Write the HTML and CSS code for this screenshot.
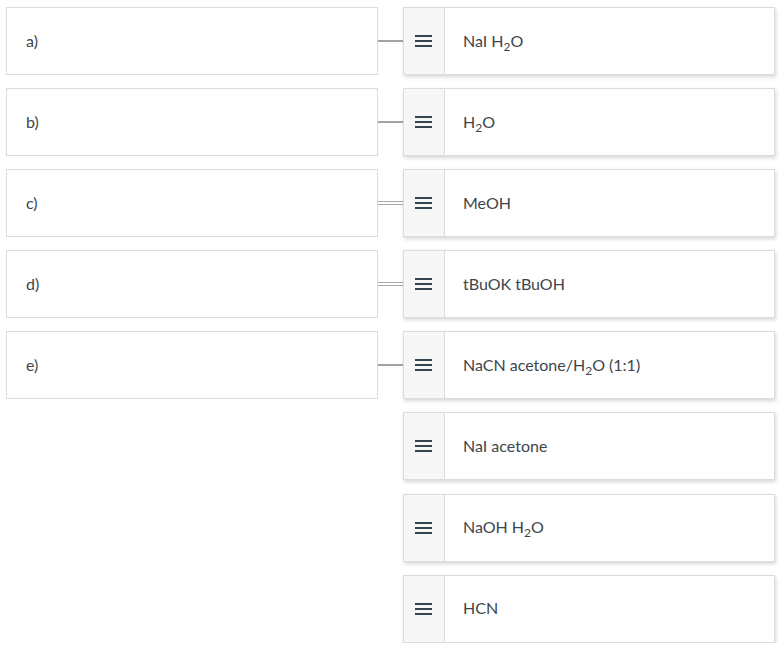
FILE: index.html
```html
<!DOCTYPE html>
<html>
<head>
<meta charset="utf-8">
<link rel="stylesheet" href="styles.css">
</head>
<body>
<div class="board">
  <div class="row">
    <div class="slot"><span>a)</span></div>
    <div class="conn single"></div>
    <div class="item"><div class="handle"><span class="burger"></span></div><div class="label"><span>NaI H<sub>2</sub>O</span></div></div>
  </div>
  <div class="row">
    <div class="slot"><span>b)</span></div>
    <div class="conn single"></div>
    <div class="item"><div class="handle"><span class="burger"></span></div><div class="label"><span>H<sub>2</sub>O</span></div></div>
  </div>
  <div class="row">
    <div class="slot"><span>c)</span></div>
    <div class="conn double"></div>
    <div class="item"><div class="handle"><span class="burger"></span></div><div class="label"><span>MeOH</span></div></div>
  </div>
  <div class="row">
    <div class="slot"><span>d)</span></div>
    <div class="conn double"></div>
    <div class="item"><div class="handle"><span class="burger"></span></div><div class="label"><span>tBuOK tBuOH</span></div></div>
  </div>
  <div class="row">
    <div class="slot"><span>e)</span></div>
    <div class="conn single"></div>
    <div class="item"><div class="handle"><span class="burger"></span></div><div class="label"><span>NaCN acetone/H<sub>2</sub>O (1:1)</span></div></div>
  </div>
  <div class="row">
    <div class="blank"></div>
    <div class="conn"></div>
    <div class="item"><div class="handle"><span class="burger"></span></div><div class="label"><span>NaI acetone</span></div></div>
  </div>
  <div class="row">
    <div class="blank"></div>
    <div class="conn"></div>
    <div class="item"><div class="handle"><span class="burger"></span></div><div class="label"><span>NaOH H<sub>2</sub>O</span></div></div>
  </div>
  <div class="row">
    <div class="blank"></div>
    <div class="conn"></div>
    <div class="item"><div class="handle"><span class="burger"></span></div><div class="label"><span>HCN</span></div></div>
  </div>
</div>
</body>
</html>
```
FILE: styles.css
```css
html, body {
  margin: 0;
  padding: 0;
  background: #ffffff;
}
body {
  font-family: "Lato", "Open Sans", sans-serif;
  font-size: 16px;
  color: #3d454b;
}
.board {
  display: flex;
  flex-direction: column;
  gap: 13.1px;
  padding: 7px 0 0 6px;
}
.row {
  display: flex;
  align-items: center;
  height: 68px;
}
.slot, .blank {
  width: 372px;
  height: 68px;
  box-sizing: border-box;
  display: flex;
  align-items: center;
  padding-left: 19px;
  padding-bottom: 2px;
}
.slot {
  border: 1px solid #dcdcdc;
}
.conn {
  width: 25px;
  box-sizing: border-box;
}
.conn.single {
  height: 2px;
  background: #a3a3a3;
}
.conn.double {
  height: 4px;
  border-top: 1px solid #a8a8a8;
  border-bottom: 1px solid #a8a8a8;
  background: #fff;
}
.item {
  width: 372px;
  height: 68px;
  box-sizing: border-box;
  border: 1px solid #dcdcdc;
  box-shadow: 1px 2px 4px rgba(0, 0, 0, 0.16);
  display: flex;
  background: #fff;
}
.handle {
  width: 40px;
  flex: none;
  background: #f7f7f7;
  border-right: 1px solid #dcdcdc;
  display: flex;
  align-items: center;
  justify-content: center;
}
.burger {
  display: block;
  width: 17px;
  height: 2px;
  background: #36444e;
  box-shadow: 0 -5px 0 #36444e, 0 5px 0 #36444e;
  margin-left: -1px;
}
.label {
  display: flex;
  align-items: center;
  padding-left: 18px;
  padding-bottom: 2px;
  white-space: pre;
}
sub {
  font-size: 12px;
  line-height: 0;
  vertical-align: -4px;
}
```
